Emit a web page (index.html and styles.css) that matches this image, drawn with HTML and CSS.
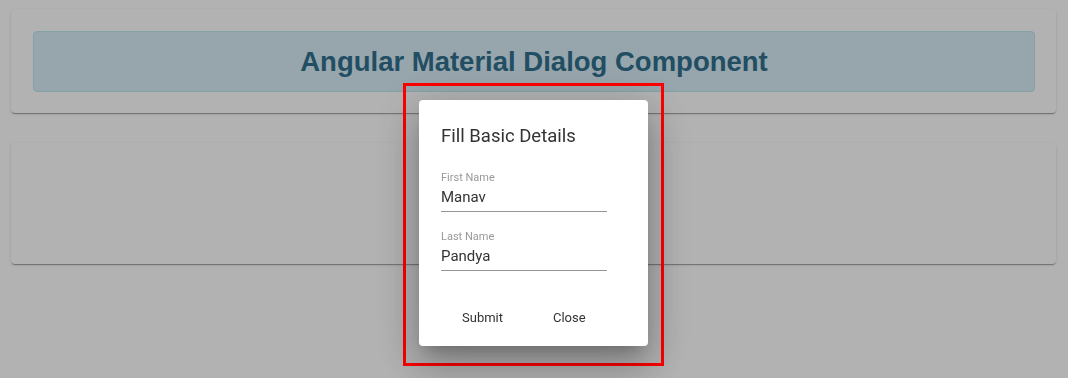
FILE: index.html
```html
<!DOCTYPE html>
<html lang="en">

<head>
    <meta charset="UTF-8">
    <meta name="viewport" content="width=device-width, initial-scale=1.0">
    <title>Angular Material Dialog Component</title>
    <link rel="stylesheet" href="styles.css">
</head>

<body>
    <div class="page">
        <div class="card">
            <div class="alert-info">
                <h2>Angular Material Dialog Component</h2>
            </div>
        </div>
        <div class="card card-empty"></div>
    </div>

    <div class="backdrop">
        <div class="dialog-wrap">
            <div class="highlight"></div>
            <div class="dialog">
                <h3 class="dialog-title">Fill Basic Details</h3>
                <div class="form-field">
                    <label class="field-label">First Name</label>
                    <input type="text" class="field-input" value="Manav">
                </div>
                <div class="form-field">
                    <label class="field-label">Last Name</label>
                    <input type="text" class="field-input" value="Pandya">
                </div>
                <div class="dialog-actions">
                    <button class="btn">Submit</button>
                    <button class="btn">Close</button>
                </div>
            </div>
        </div>
    </div>
</body>

</html>
```

FILE: styles.css
```css
body {
    font-family: "Liberation Sans", Arial, sans-serif;
    margin: 0;
    padding: 0;
    background-color: #fff;
}

.page {
    padding: 9px 12px 0 11px;
}

.card {
    background-color: #fff;
    border-radius: 4px;
    padding: 22px 21px 21px 22px;
    margin-bottom: 30px;
    box-shadow: 0 2px 1px -1px rgba(0, 0, 0, 0.2), 0 1px 1px 0 rgba(0, 0, 0, 0.14), 0 1px 3px 0 rgba(0, 0, 0, 0.12);
}

.card-empty {
    height: 78px;
}

.alert-info {
    background-color: #d9edf7;
    border: 1px solid #bce8f1;
    border-radius: 4px;
    padding: 9px 10px;
    text-align: center;
}

.alert-info h2 {
    margin: 0;
    font-size: 27.5px;
    line-height: 41px;
    font-weight: bold;
    color: #31708f;
}

.backdrop {
    position: fixed;
    inset: 0;
    background-color: rgba(0, 0, 0, 0.3);
    display: flex;
    justify-content: center;
    align-items: flex-start;
    padding-top: 100px;
}

.dialog-wrap {
    position: relative;
    margin-right: 1px;
}

.highlight {
    position: absolute;
    top: -17px;
    left: -16px;
    right: -16px;
    bottom: -20px;
    border: 3px solid #ff0000;
}

.dialog {
    position: relative;
    width: 229px;
    box-sizing: border-box;
    padding: 24px 22px 11px 22px;
    background-color: #fff;
    border-radius: 4px;
    font-family: Roboto, "Liberation Sans", sans-serif;
    box-shadow: 0 11px 15px -7px rgba(0, 0, 0, 0.22), 0 24px 38px 3px rgba(0, 0, 0, 0.16), 0 9px 46px 8px rgba(0, 0, 0, 0.14);
}

.dialog-title {
    margin: 0 0 23px 0;
    font-size: 18.5px;
    line-height: 24px;
    font-weight: 400;
    color: #333;
}

.form-field {
    width: 166px;
    margin-bottom: 18px;
}

.field-label {
    display: block;
    font-size: 11px;
    line-height: 13px;
    color: #999;
    margin-bottom: 3px;
}

.field-input {
    display: block;
    width: 100%;
    box-sizing: border-box;
    border: none;
    border-bottom: 1px solid #949494;
    padding: 0 0 4px 0;
    font-family: inherit;
    font-size: 15px;
    line-height: 20px;
    color: #333;
    outline: none;
}

.dialog-actions {
    display: flex;
    gap: 8px;
    margin-top: 28px;
}

.btn {
    height: 36px;
    padding: 0 21px;
    background: none;
    border: none;
    font-family: inherit;
    font-size: 13px;
    color: #333;
    cursor: pointer;
}
```
